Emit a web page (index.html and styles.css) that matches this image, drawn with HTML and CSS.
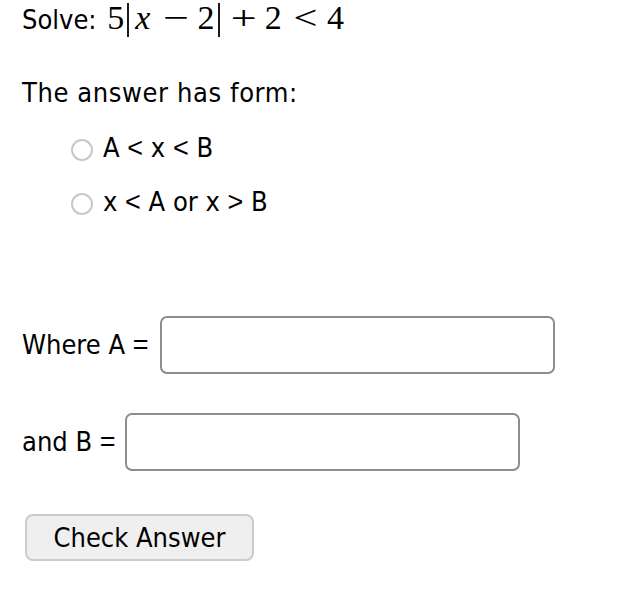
FILE: index.html
```html
<!DOCTYPE html>
<html lang="en">
<head>
<meta charset="utf-8">
<title>Absolute value inequality</title>
<link rel="stylesheet" href="styles.css">
</head>
<body>
<main class="problem">
  <p class="line solve">Solve: <span class="math"><span class="mn">5</span><span class="bar bar-open" aria-label="|"></span><span class="mi">x</span><span class="mo minus">−</span><span class="mn">2</span><span class="bar bar-close" aria-label="|"></span><span class="mo plus">+</span><span class="mn">2</span><span class="mo rel">&lt;</span><span class="mn">4</span></span></p>

  <p class="line prompt">The answer has form:</p>

  <div class="choices">
    <label class="line choice"><input type="radio" name="form" class="radio"><span>A <span class="sym">&lt;</span> x <span class="sym">&lt;</span> B</span></label>
    <label class="line choice"><input type="radio" name="form" class="radio"><span>x <span class="sym">&lt;</span> A or x <span class="sym">&gt;</span> B</span></label>
  </div>

  <div class="field field-a">
    <label class="line" for="a">Where A <span class="sym">=</span></label>
    <input id="a" type="text" class="box">
  </div>

  <div class="field field-b">
    <label class="line" for="b">and B <span class="sym">=</span></label>
    <input id="b" type="text" class="box">
  </div>

  <button type="button" class="check">Check Answer</button>
</main>
</body>
</html>
```

FILE: styles.css
```css
html, body {
  margin: 0;
  background: #fff;
}

body {
  font-family: "DejaVu Sans Condensed", Tahoma, "DejaVu Sans", sans-serif;
  font-size: 27px;
  color: #000;
}

.problem {
  padding: 0 22px;
}

.line {
  display: block;
  margin: 0;
  line-height: 40px;
  height: 40px;
}

/* comparison and equals signs set narrower than the body face */
.sym {
  font-family: "Liberation Sans", Arial, sans-serif;
}

.solve {
  white-space: nowrap;
}

/* typeset inequality */
.math {
  font-family: "Liberation Serif", "Times New Roman", serif;
  font-size: 34px;
  line-height: 0;
  margin-left: 3px;
}
.math .mi { font-style: italic; }
.math .bar {
  display: inline-block;
  width: 2px;
  height: 34px;
  background: #1a1a1a;
  vertical-align: -8px;
}
.math .bar-open { margin: 0 6px 0 3px; }
.math .bar-close { margin: 0 3px 0 3px; }
.math .mo { display: inline-block; transform: scaleX(1.35); }
.math .rel { transform: scaleX(1.25); }
.math .minus { margin: 0 12px 0 16px; }
.math .plus { margin: 0 12px 0 11px; }
.math .rel { margin: 0 12px 0 14px; }

.prompt {
  margin-top: 33px;
  letter-spacing: 0.6px;
}

.choices {
  margin-top: 15px;
  padding-left: 49px;
  display: flex;
  flex-direction: column;
  gap: 14px;
}

.choice {
  display: flex;
  align-items: center;
  gap: 10px;
}

.radio {
  appearance: none;
  -webkit-appearance: none;
  margin: 4px 0 0 0;
  width: 22px;
  height: 22px;
  border: 2px solid #c8c8c8;
  border-radius: 50%;
  background: #fff;
  box-sizing: border-box;
}

.field {
  display: flex;
  align-items: center;
  gap: 11px;
}

.field-a { margin-top: 94px; }
.field-b { margin-top: 39px; gap: 9px; }

.box {
  width: 395px;
  height: 58px;
  box-sizing: border-box;
  border: 2px solid #8d8d8d;
  border-radius: 7px;
  background: #fff;
  margin: 0;
  padding: 0 8px;
  font: inherit;
}

.check {
  display: block;
  margin: 43px 0 0 3px;
  width: 229px;
  height: 47px;
  box-sizing: border-box;
  background: #efefef;
  border: 2px solid #cbcbcb;
  border-radius: 8px;
  font-family: inherit;
  font-size: 27px;
  color: #000;
  padding: 0;
}
```
